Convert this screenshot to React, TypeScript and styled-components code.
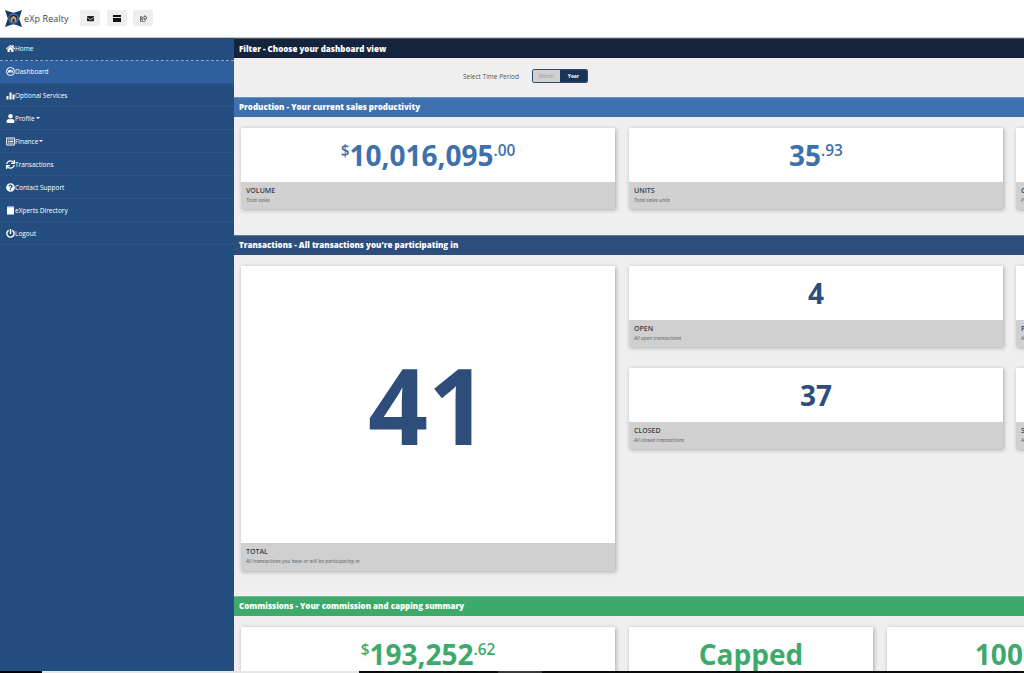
import React from "react";
import styled, { createGlobalStyle } from "styled-components";
import {
  FaHome,
  FaUser,
  FaRegListAlt,
  FaSync,
  FaQuestionCircle,
  FaPowerOff,
  FaEnvelope,
  FaRegShareSquare,
} from "react-icons/fa";

const GlobalStyle = createGlobalStyle`
  html, body {
    margin: 0;
    padding: 0;
    height: 100%;
    overflow: hidden;
    background: #fff;
  }
  body {
    font-family: "Open Sans", "Liberation Sans", sans-serif;
  }
`;

const Page = styled.div`
  width: 1024px;
  height: 673px;
  overflow: hidden;
  display: flex;
  flex-direction: column;
`;

const TopBar = styled.header`
  flex: 0 0 38px;
  box-sizing: border-box;
  display: flex;
  align-items: center;
  padding: 0 0 1px 5px;
  background: #fff;
  border-bottom: 1px solid #c8c8c8;
`;

const Logo = styled.div`
  display: flex;
  align-items: center;
  gap: 2px;
  width: 75px;
  font-size: 9px;
  color: #444;
  letter-spacing: 0.1px;
`;

const TopButtons = styled.div`
  display: flex;
  gap: 6.5px;
`;

const TopButton = styled.div`
  width: 20px;
  height: 16px;
  display: flex;
  align-items: center;
  justify-content: center;
  background: #eeeeee;
  border-radius: 2px;
  font-size: 7px;
  color: #222;
`;

const Body = styled.div`
  flex: 1;
  display: flex;
  min-height: 0;
`;

const Sidebar = styled.nav`
  flex: 0 0 234px;
  background: #254e80;
`;

const NavRow = styled.div<{ $active?: boolean; $dashed?: boolean }>`
  height: 23px;
  box-sizing: border-box;
  display: flex;
  align-items: center;
  padding: 0 0 ${(p) => (p.$active || p.$dashed ? 2 : 0)}px 6px;
  font-size: 6.5px;
  color: #fff;
  background: ${(p) => (p.$active ? "#2e5f9e" : "transparent")};
  border-bottom: 1px ${(p) => (p.$dashed ? "dashed #8fa6c4" : "solid #2b5688")};
  svg {
    width: 9px;
    height: 9px;
    flex: 0 0 9px;
  }
`;

const Caret = styled.span`
  width: 0;
  height: 0;
  margin-left: 1px;
  border-left: 2px solid transparent;
  border-right: 2px solid transparent;
  border-top: 2px solid #fff;
`;

const Main = styled.main`
  flex: 1;
  min-width: 0;
  overflow: hidden;
  background: #efefef;
`;

const SectionBar = styled.div<{ $color: string }>`
  height: 20px;
  box-sizing: border-box;
  display: flex;
  align-items: center;
  padding: 0 0 3px 5px;
  background: ${(p) => p.$color};
  border-top: 1px solid rgba(255, 255, 255, 0.25);
  color: #fff;
  font-weight: 800;
  font-size: 8px;
  white-space: nowrap;
`;

const FilterBar = styled(SectionBar)`
  padding-bottom: 0;
`;

const FilterRow = styled.div`
  height: 39px;
  box-sizing: border-box;
  display: flex;
  align-items: center;
  padding: 0 0 3px 229px;
  font-size: 6.5px;
  color: #555;
`;

const Toggle = styled.div`
  display: flex;
  margin-left: 13px;
  height: 14px;
  width: 56px;
  box-sizing: border-box;
  border: 1px solid #2f4a70;
  border-radius: 2px;
  overflow: hidden;
  font-size: 5px;
`;

const ToggleOption = styled.div<{ $on?: boolean }>`
  flex: 1;
  display: flex;
  align-items: center;
  justify-content: center;
  background: ${(p) => (p.$on ? "#1b3358" : "#d0d0d0")};
  color: ${(p) => (p.$on ? "#fff" : "#999")};
  font-weight: ${(p) => (p.$on ? 700 : 400)};
`;

const Cards = styled.div`
  display: grid;
  grid-template-columns: 374px 374px 374px;
  column-gap: 14px;
  padding: 11px 0 26px 7px;
`;

const Card = styled.div`
  display: flex;
  flex-direction: column;
  box-shadow: 1px 1px 4px rgba(0, 0, 0, 0.3);
  border-radius: 1px;
`;

const LastCard = styled(Card)`
  margin-left: -1px;
`;

const CardValue = styled.div<{ $color: string; $height: number; $size: number }>`
  height: ${(p) => p.$height}px;
  display: flex;
  align-items: center;
  justify-content: center;
  background: #fff;
  color: ${(p) => p.$color};
  font-size: ${(p) => p.$size}px;
  font-weight: 700;
  line-height: 1;
  white-space: nowrap;
`;

const Sup = styled.sup`
  font-size: 0.55em;
  font-weight: 600;
  line-height: 0;
  vertical-align: 0.65em;
`;

const CardFoot = styled.div<{ $height: number }>`
  height: ${(p) => p.$height}px;
  box-sizing: border-box;
  padding: 4px 5px 0;
  background: #d0d0d0;
`;

const FootTitle = styled.div`
  font-size: 7px;
  font-weight: 600;
  line-height: 9px;
  color: #3a404c;
  text-transform: uppercase;
`;

const FootNote = styled.div`
  margin-top: 1px;
  font-size: 5.1px;
  font-style: italic;
  line-height: 8px;
  color: #5f5f5f;
  white-space: nowrap;
`;

const TxGrid = styled.div`
  display: grid;
  grid-template-columns: 374px 374px 374px;
  grid-template-rows: 81px 81px;
  column-gap: 14px;
  row-gap: 21px;
  padding: 11px 0 25px 7px;
  height: 305px;
`;

const TallCard = styled(Card)`
  grid-row: 1 / span 3;
  height: 305px;
`;

const GreenGrid = styled.div`
  display: grid;
  grid-template-columns: 374px 244px 249px;
  column-gap: 14px;
  padding: 11px 0 0 7px;
`;

const BottomStrip = styled.div`
  flex: 0 0 2px;
  display: flex;
`;

const StripPart = styled.div<{ $width: number; $color: string }>`
  width: ${(p) => p.$width}px;
  background: ${(p) => p.$color};
`;

const LogoMark = () => (
  <svg width="17" height="17" viewBox="0 0 18 18" aria-hidden="true">
    <path d="M0 0 L6 2 L9 3 L12 2 L18 0 L16 6 L15 9 L16 12 L18 18 L12 16 L9 15 L6 16 L0 18 L2 12 L3 9 L2 6 Z" fill="#173a6b" />
    <circle cx="9" cy="9" r="5.5" fill="#3f76bd" />
    <circle cx="9" cy="9" r="4" fill="#14233b" />
    <path d="M6 12.5 L6 8.5 L9 6 L12 8.5 L12 12.5 Z" fill="#c9a06e" />
    <rect x="8" y="9.5" width="2" height="3" fill="#14233b" />
  </svg>
);

const CardBoxIcon = () => (
  <svg width="8" height="7" viewBox="0 0 8 7" aria-hidden="true">
    <rect x="0" y="0" width="8" height="2" fill="#111" />
    <rect x="0" y="3" width="8" height="4" fill="#111" />
  </svg>
);

const GaugeIcon = () => (
  <svg viewBox="0 0 18 18" aria-hidden="true">
    <circle cx="9" cy="9" r="8" fill="none" stroke="#fff" strokeWidth="2" />
    <path d="M3.5 11 A5.5 5.5 0 0 1 14.5 11 Z" fill="#fff" />
    <path d="M9 10.5 L12 6.5" stroke="#254e80" strokeWidth="1.4" />
  </svg>
);

const BarsIcon = () => (
  <svg viewBox="0 0 18 18" aria-hidden="true">
    <rect x="1" y="10" width="4" height="7" fill="#fff" />
    <rect x="7" y="3" width="4" height="14" fill="#fff" />
    <rect x="13" y="7" width="4" height="10" fill="#fff" />
  </svg>
);

const NotebookIcon = () => (
  <svg viewBox="0 0 18 18" aria-hidden="true">
    <rect x="2" y="1" width="14" height="16" rx="1" fill="#fff" />
    <rect x="2" y="3" width="14" height="1" fill="#9db2cc" />
  </svg>
);

const navItems = [
  { label: "Home", icon: <FaHome />, dashed: true },
  { label: "Dashboard", icon: <GaugeIcon />, active: true },
  { label: "Optional Services", icon: <BarsIcon /> },
  { label: "Profile", icon: <FaUser />, caret: true },
  { label: "Finance", icon: <FaRegListAlt />, caret: true },
  { label: "Transactions", icon: <FaSync /> },
  { label: "Contact Support", icon: <FaQuestionCircle /> },
  { label: "eXperts Directory", icon: <NotebookIcon /> },
  { label: "Logout", icon: <FaPowerOff /> },
];

const blue = "#3d70ad";
const navy = "#2e4d7b";
const green = "#3daa6b";

type StatProps = {
  color: string;
  height?: number;
  footHeight?: number;
  size?: number;
  title: string;
  note: string;
  children: React.ReactNode;
};

const Stat = ({ color, height = 54, footHeight = 27, size = 28, title, note, children }: StatProps) => (
  <>
    <CardValue $color={color} $height={height} $size={size}>
      <span>{children}</span>
    </CardValue>
    <CardFoot $height={footHeight}>
      <FootTitle>{title}</FootTitle>
      <FootNote>{note}</FootNote>
    </CardFoot>
  </>
);

export default function App() {
  return (
    <Page>
      <GlobalStyle />
      <TopBar>
        <Logo>
          <LogoMark />
          eXp Realty
        </Logo>
        <TopButtons>
          <TopButton><FaEnvelope /></TopButton>
          <TopButton><CardBoxIcon /></TopButton>
          <TopButton><FaRegShareSquare /></TopButton>
        </TopButtons>
      </TopBar>
      <Body>
        <Sidebar>
          {navItems.map((item) => (
            <NavRow key={item.label} $active={item.active} $dashed={item.dashed}>
              {item.icon}
              {item.label}
              {item.caret && <Caret />}
            </NavRow>
          ))}
        </Sidebar>
        <Main>
          <FilterBar $color="#14243c">Filter - Choose your dashboard view</FilterBar>
          <FilterRow>
            Select Time Period
            <Toggle>
              <ToggleOption>Month</ToggleOption>
              <ToggleOption $on>Year</ToggleOption>
            </Toggle>
          </FilterRow>
          <SectionBar $color={blue}>Production - Your current sales productivity</SectionBar>
          <Cards>
            <Card>
              <Stat color={blue} title="Volume" note="Total sales">
                <Sup>$</Sup>10,016,095<Sup>.00</Sup>
              </Stat>
            </Card>
            <Card>
              <Stat color={blue} title="Units" note="Total sales units">
                35<Sup>.93</Sup>
              </Stat>
            </Card>
            <LastCard>
              <Stat color={blue} title="GCI" note="Production">
                0
              </Stat>
            </LastCard>
          </Cards>
          <SectionBar $color={navy}>Transactions - All transactions you're participating in</SectionBar>
          <TxGrid>
            <TallCard>
              <Stat color={navy} height={277} footHeight={28} size={105} title="Total" note="All transactions you have or will be participating in">
                41
              </Stat>
            </TallCard>
            <Card>
              <Stat color={navy} title="Open" note="All open transactions">4</Stat>
            </Card>
            <LastCard>
              <Stat color={navy} title="Pending" note="All pending transactions">0</Stat>
            </LastCard>
            <Card>
              <Stat color={navy} title="Closed" note="All closed transactions">37</Stat>
            </Card>
            <LastCard>
              <Stat color={navy} title="Sold" note="All sold transactions">0</Stat>
            </LastCard>
          </TxGrid>
          <SectionBar $color={green}>Commissions - Your commission and capping summary</SectionBar>
          <GreenGrid>
            <Card>
              <Stat color={green} title="Commission" note="Total commission">
                <Sup>$</Sup>193,252<Sup>.62</Sup>
              </Stat>
            </Card>
            <Card>
              <Stat color={green} title="Status" note="Capping status">Capped</Stat>
            </Card>
            <Card>
              <Stat color={green} title="Cap" note="Capping progress">100%</Stat>
            </Card>
          </GreenGrid>
        </Main>
      </Body>
      <BottomStrip>
        <StripPart $width={42} $color="#000" />
        <StripPart $width={317} $color="#e6e6e6" />
        <StripPart $width={139} $color="#0b0b0b" />
        <StripPart $width={44} $color="#3a3a3a" />
        <StripPart $width={482} $color="#0b0b0b" />
      </BottomStrip>
    </Page>
  );
}
